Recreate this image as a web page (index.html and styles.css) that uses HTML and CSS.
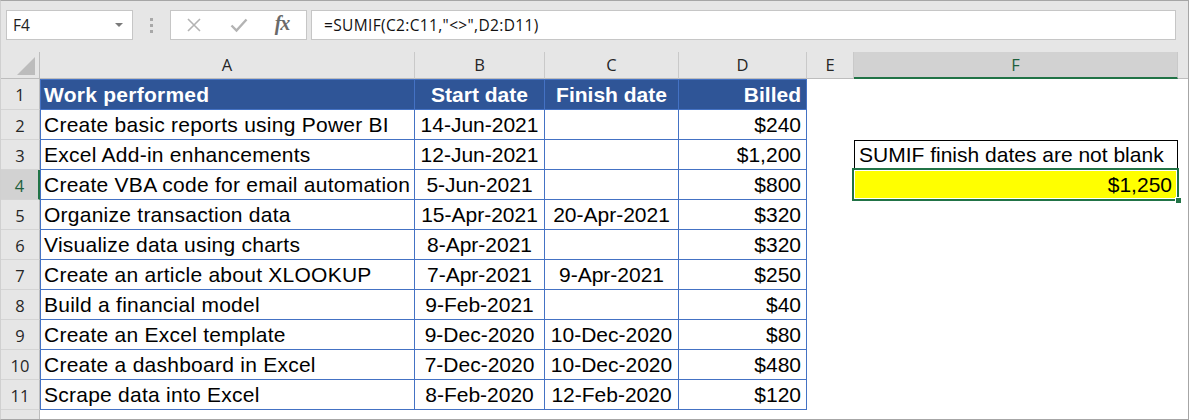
FILE: index.html
```html
<!DOCTYPE html>
<html>
<head>
<meta charset="utf-8">
<link rel="stylesheet" href="styles.css">
</head>
<body>
<div class="app">
  <div class="toolbar">
    <div class="namebox"><span class="nb-text">F4</span><span class="nb-arrow"></span></div>
    <div class="grip"><span></span><span></span><span></span></div>
    <div class="btnbox">
      <div class="btn">
        <svg width="16" height="16" viewBox="0 0 16 16"><path d="M2 2 L14 14 M14 2 L2 14" stroke="#b3b3b3" stroke-width="1.6" fill="none"/></svg>
      </div>
      <div class="btn">
        <svg width="18" height="16" viewBox="0 0 18 16"><path d="M1.5 8.5 L6.5 13.5 L16.5 2.5" stroke="#b3b3b3" stroke-width="2.4" fill="none"/></svg>
      </div>
      <div class="btn"><span class="fx">fx</span></div>
    </div>
    <div class="formula">=SUMIF(C2:C11,"&lt;&gt;",D2:D11)</div>
  </div>

  <div class="sheet">
    <div class="ch corner"><span class="tri"></span></div>
    <div class="ch">A</div>
    <div class="ch">B</div>
    <div class="ch">C</div>
    <div class="ch">D</div>
    <div class="ch">E</div>
    <div class="ch ch-sel">F</div>
    <div class="ch ch-rest"></div>

    <div class="rh r1">1</div>
    <div class="c tb ta th r1">Work performed</div>
    <div class="c tb th r1 ctr">Start date</div>
    <div class="c tb th r1 ctr">Finish date</div>
    <div class="c tb th r1 num">Billed</div>
    <div class="c r1"></div><div class="c r1"></div><div class="c r1"></div>

    <div class="rh">2</div>
    <div class="c tb ta">Create basic reports using Power BI</div>
    <div class="c tb ctr">14-Jun-2021</div>
    <div class="c tb ctr"></div>
    <div class="c tb num">$240</div>
    <div class="c"></div><div class="c"></div><div class="c"></div>

    <div class="rh">3</div>
    <div class="c tb ta">Excel Add-in enhancements</div>
    <div class="c tb ctr">12-Jun-2021</div>
    <div class="c tb ctr"></div>
    <div class="c tb num">$1,200</div>
    <div class="c"></div><div class="c label">SUMIF finish dates are not blank</div><div class="c"></div>

    <div class="rh rh-sel">4</div>
    <div class="c tb ta">Create VBA code for email automation</div>
    <div class="c tb ctr">5-Jun-2021</div>
    <div class="c tb ctr"></div>
    <div class="c tb num">$800</div>
    <div class="c"></div><div class="c result num">$1,250<span class="sel"><span class="handle"></span></span></div><div class="c"></div>

    <div class="rh">5</div>
    <div class="c tb ta">Organize transaction data</div>
    <div class="c tb ctr">15-Apr-2021</div>
    <div class="c tb ctr">20-Apr-2021</div>
    <div class="c tb num">$320</div>
    <div class="c"></div><div class="c"></div><div class="c"></div>

    <div class="rh">6</div>
    <div class="c tb ta">Visualize data using charts</div>
    <div class="c tb ctr">8-Apr-2021</div>
    <div class="c tb ctr"></div>
    <div class="c tb num">$320</div>
    <div class="c"></div><div class="c"></div><div class="c"></div>

    <div class="rh">7</div>
    <div class="c tb ta">Create an article about XLOOKUP</div>
    <div class="c tb ctr">7-Apr-2021</div>
    <div class="c tb ctr">9-Apr-2021</div>
    <div class="c tb num">$250</div>
    <div class="c"></div><div class="c"></div><div class="c"></div>

    <div class="rh">8</div>
    <div class="c tb ta">Build a financial model</div>
    <div class="c tb ctr">9-Feb-2021</div>
    <div class="c tb ctr"></div>
    <div class="c tb num">$40</div>
    <div class="c"></div><div class="c"></div><div class="c"></div>

    <div class="rh">9</div>
    <div class="c tb ta">Create an Excel template</div>
    <div class="c tb ctr">9-Dec-2020</div>
    <div class="c tb ctr">10-Dec-2020</div>
    <div class="c tb num">$80</div>
    <div class="c"></div><div class="c"></div><div class="c"></div>

    <div class="rh">10</div>
    <div class="c tb ta">Create a dashboard in Excel</div>
    <div class="c tb ctr">7-Dec-2020</div>
    <div class="c tb ctr">10-Dec-2020</div>
    <div class="c tb num">$480</div>
    <div class="c"></div><div class="c"></div><div class="c"></div>

    <div class="rh">11</div>
    <div class="c tb ta">Scrape data into Excel</div>
    <div class="c tb ctr">8-Feb-2020</div>
    <div class="c tb ctr">12-Feb-2020</div>
    <div class="c tb num">$120</div>
    <div class="c"></div><div class="c"></div><div class="c"></div>

    <div class="rh rh-last"></div>
    <div class="c"></div><div class="c"></div><div class="c"></div><div class="c"></div>
    <div class="c"></div><div class="c"></div><div class="c"></div>
  </div>
</div>
</body>
</html>
```

FILE: styles.css
```css
* { box-sizing: border-box; }
html, body { margin: 0; padding: 0; background: #fff; }

.app {
  width: 1189px;
  height: 420px;
  border: 1px solid #a6a6a6;
  border-left-color: #d0d0d0;
  background: #fff;
  overflow: hidden;
  display: flex;
  flex-direction: column;
}

/* ---------- toolbar / formula bar ---------- */
.toolbar {
  height: 51px;
  flex: 0 0 51px;
  background: #e6e6e6;
  display: flex;
  align-items: flex-start;
  padding: 9px 12px 0 5px;
  font-family: "Open Sans", "Noto Sans", sans-serif;
}
.namebox {
  width: 127px;
  height: 30px;
  background: #fff;
  border: 1px solid #c6c6c6;
  display: flex;
  align-items: center;
  justify-content: space-between;
  padding: 0 9px 0 6px;
}
.nb-text { font-size: 15.5px; color: #222; }
.nb-arrow {
  width: 0; height: 0;
  border-left: 4px solid transparent;
  border-right: 4px solid transparent;
  border-top: 4px solid #7a7a7a;
}
.grip {
  width: 37px;
  height: 30px;
  display: flex;
  flex-direction: column;
  align-items: center;
  justify-content: center;
  gap: 3px;
}
.grip span { width: 3px; height: 3px; background: #a8a8a8; }
.btnbox {
  width: 137px;
  height: 30px;
  background: #fff;
  border: 1px solid #c6c6c6;
  display: flex;
}
.btn {
  width: 45px;
  height: 28px;
  display: flex;
  align-items: center;
  justify-content: center;
}
.fx {
  font-family: "Liberation Serif", serif;
  font-style: italic;
  font-weight: bold;
  font-size: 20px;
  color: #6a6a6a;
  letter-spacing: -1px;
  margin-top: -3px;
  margin-right: 3px;
}
.formula {
  flex: 1;
  margin-left: 4px;
  height: 30px;
  background: #fff;
  border: 1px solid #c6c6c6;
  padding-left: 12px;
  font-size: 15.5px;
  letter-spacing: 0.35px;
  line-height: 28px;
  color: #111;
}

/* ---------- sheet grid ---------- */
.sheet {
  flex: 1;
  display: grid;
  grid-template-columns: 39px 375px 130px 134px 128px 47px 324px 1fr;
  grid-template-rows: 27px 31px repeat(10, 30px) 1fr;
  font-family: "Liberation Sans", Arial, sans-serif;
}
.ch {
  background: #e6e6e6;
  border-right: 1px solid #c9c9c9;
  border-bottom: 1px solid #bdbdbd;
  font-family: "Open Sans", "Noto Sans", sans-serif;
  font-size: 16.5px;
  line-height: 25px;
  text-align: center;
  color: #262626;
}
.corner { position: relative; border-right-color: #bdbdbd; }
.tri {
  position: absolute;
  right: 4px;
  bottom: 3px;
  width: 0; height: 0;
  border-left: 18px solid transparent;
  border-bottom: 18px solid #bcbcbc;
}
.ch-sel {
  background: #d2d2d2;
  border-bottom: 2px solid #217346;
  color: #1d5f3d;
}
.ch-rest { border-right: none; }

.rh {
  background: #e6e6e6;
  border-right: 1px solid #bdbdbd;
  border-bottom: 1px solid #d4d4d4;
  font-family: "Open Sans", "Noto Sans", sans-serif;
  font-size: 16.5px;
  text-align: center;
  line-height: 31px;
  color: #262626;
}
.rh.r1 { line-height: 32px; }
.rh-sel {
  background: #d2d2d2;
  border-right: 2px solid #217346;
  color: #1d5f3d;
}
.rh-last { border-bottom: none; }

.c {
  font-size: 21px;
  line-height: 29px;
  padding: 0 5px 0 4px;
  white-space: nowrap;
  overflow: hidden;
  color: #000;
}
.c.r1 { line-height: 30px; }
.tb {
  border-right: 1px solid #4472c4;
  border-bottom: 1px solid #4472c4;
}
.ta { border-left: 1px solid #4472c4; padding-left: 3px; letter-spacing: 0.25px; }
.th {
  background: #2f5597;
  color: #fff;
  font-weight: bold;
  border-top: 1px solid #4472c4;
}
.ctr { text-align: center; padding: 0; }
.num { text-align: right; }

.label {
  box-shadow: inset 0 0 0 1px #000;
  padding-left: 5px;
}
.result {
  position: relative;
  background: #ffff00;
  overflow: visible;
  padding-right: 6px;
}
.sel {
  position: absolute;
  left: -2px;
  top: -2px;
  right: -1px;
  bottom: -1px;
  border: 2px solid #217346;
  box-shadow: inset 0 0 0 1px #fff;
}
.handle {
  position: absolute;
  right: -5px;
  bottom: -5px;
  width: 7px;
  height: 7px;
  background: #217346;
  border: 1px solid #fff;
}
```
